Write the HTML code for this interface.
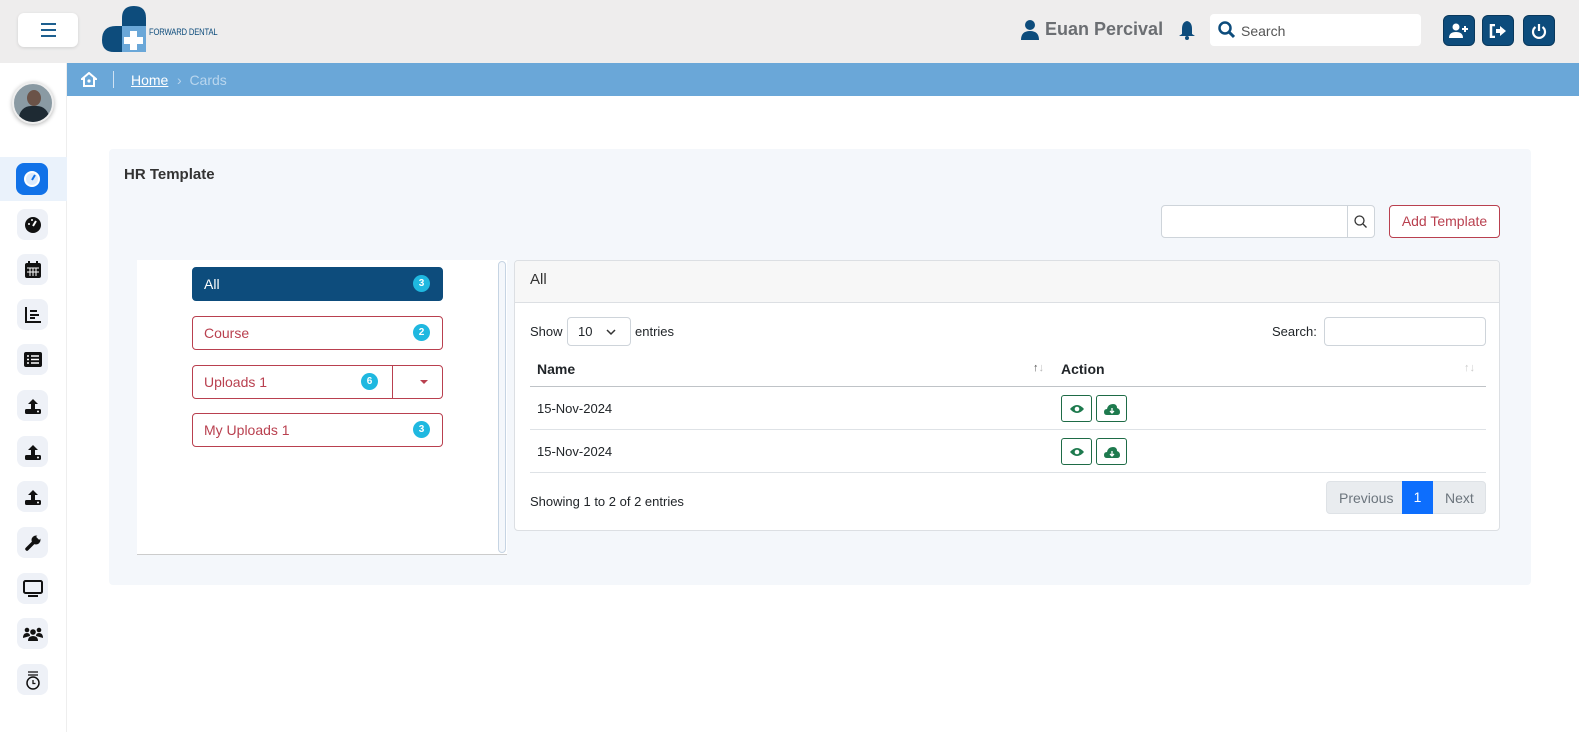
<!DOCTYPE html>
<html><head><meta charset="utf-8"><style>
*{box-sizing:border-box;margin:0;padding:0}
body{width:1579px;height:732px;overflow:hidden;background:#fff;font-family:"Liberation Sans",sans-serif;color:#212529;position:relative;font-size:14px}
.abs{position:absolute}
.top{left:0;top:0;width:1579px;height:63px;background:#eeeded}
.ham{left:18px;top:13px;width:60px;height:34px;background:#fff;border-radius:6px;box-shadow:0 1px 3px rgba(0,0,0,.12)}
.ham i{position:absolute;left:23px;width:15px;height:2px;background:#1d5f8f}
.crumb{left:67px;top:63px;width:1512px;height:33px;background:#6aa7d8}
.side{left:0;top:63px;width:67px;height:669px;background:#fff;border-right:1px solid #eee}
.ic{left:17px;width:31px;height:31px;border-radius:8px;background:#eef1f7;display:flex;align-items:center;justify-content:center}
.tbtn{top:15px;width:32px;height:31px;border-radius:6px;background:#0d4c7c;border:1px solid #09385c;display:flex;align-items:center;justify-content:center}
.card{left:109px;top:149px;width:1422px;height:436px;background:#f4f7fb;border-radius:4px}
.lb{left:192px;width:251px;height:34px;border:1px solid #b9404f;border-radius:4px;color:#b9404f;font-size:14px;padding:8px 11px;background:#fff}
.badge{position:absolute;width:17px;height:17px;border-radius:50%;background:#1fb8e0;color:#fff;font-size:10px;font-weight:bold;text-align:center;line-height:17px;top:7px;right:12px}
.gb{width:31px;height:27px;border:1px solid #1e6b46;border-radius:3px;display:flex;align-items:center;justify-content:center;background:#fff}
.line{left:530px;width:956px;height:1px;background:#dee2e6}
</style></head><body>
<div class="abs top"></div>
<div class="abs ham"><i style="top:10px"></i><i style="top:16px"></i><i style="top:22px"></i></div>
<svg class="abs" style="left:102px;top:6px" width="50" height="46" viewBox="0 0 50 46">
<path d="M20 12 Q20 0 32 0 Q44 0 44 12 V46 H20Z" fill="#0d4c7c"/>
<path d="M0 34 Q0 20 14 20 H20 V46 H12 Q0 46 0 34Z" fill="#0d4c7c"/>
<rect x="20" y="20" width="24" height="26" fill="#6aa7d8"/>
<path d="M28 25h7v6h6v7h-6v6h-7v-6h-6v-7h6z" fill="#fff"/></svg>
<div class="abs" style="left:149px;top:27px;font-size:9px;color:#0d4c7c;letter-spacing:-.2px;transform:scaleX(.85);transform-origin:left">FORWARD DENTAL</div>
<svg class="abs" style="left:1021px;top:20px" width="18" height="20" viewBox="0 0 18 20"><circle cx="9" cy="5" r="5" fill="#0d4c7c"/><path d="M0 20 Q0 11 9 11 Q18 11 18 20Z" fill="#0d4c7c"/></svg>
<div class="abs" style="left:1045px;top:19px;font-size:18px;font-weight:bold;color:#6b6e72">Euan Percival</div>
<svg class="abs" style="left:1179px;top:20px" width="16" height="20" viewBox="0 0 16 20"><path d="M8 1 Q13 2 13 9 V14 L16 16 H0 L3 14 V9 Q3 2 8 1Z" fill="#0d4c7c"/><circle cx="8" cy="18" r="2" fill="#0d4c7c"/></svg>
<div class="abs" style="left:1210px;top:14px;width:211px;height:32px;background:#fff;border-radius:4px"></div>
<svg class="abs" style="left:1218px;top:21px" width="17" height="18" viewBox="0 0 17 18"><circle cx="7" cy="7" r="5.5" stroke="#0d4c7c" stroke-width="2.5" fill="none"/><path d="M11 11l5 5" stroke="#0d4c7c" stroke-width="3"/></svg>
<div class="abs" style="left:1241px;top:23px;font-size:14px;color:#555">Search</div>
<div class="abs tbtn" style="left:1443px"><svg width="20" height="16" viewBox="0 0 20 16"><circle cx="7" cy="4" r="3.5" fill="#fff"/><path d="M0 15 Q0 9 7 9 Q14 9 14 15Z" fill="#fff"/><path d="M16 3v6M13 6h6" stroke="#fff" stroke-width="2"/></svg></div>
<div class="abs tbtn" style="left:1482px"><svg width="18" height="14" viewBox="0 0 18 14"><path d="M6 1H2v12h4" stroke="#fff" stroke-width="2.5" fill="none"/><path d="M7 5h4V2l6 5-6 5V9H7z" fill="#fff"/></svg></div>
<div class="abs tbtn" style="left:1523px"><svg width="16" height="16" viewBox="0 0 16 16"><path d="M4.5 4a6 6 0 1 0 7 0" stroke="#fff" stroke-width="2.2" fill="none"/><path d="M8 1v7" stroke="#fff" stroke-width="2.2"/></svg></div>
<div class="abs crumb"></div>
<svg class="abs" style="left:81px;top:72px" width="16" height="15" viewBox="0 0 16 15"><path d="M8 1L1 7h2v7h10V7h2z" stroke="#fff" stroke-width="2" fill="none"/><circle cx="8" cy="9" r="1.6" fill="#fff"/></svg>
<div class="abs" style="left:113px;top:71px;width:1px;height:17px;background:#cfe2f3"></div>
<div class="abs" style="left:131px;top:72px;color:#fff;text-decoration:underline;font-size:14px">Home</div>
<div class="abs" style="left:177px;top:72px;color:#b9d6ee;font-size:14px">›&nbsp; Cards</div>
<div class="abs side"></div>
<div class="abs" style="left:12px;top:82px;width:42px;height:42px;border-radius:50%;background:#8a9aa3;box-shadow:0 1px 4px rgba(0,0,0,.3);border:2px solid #eee;overflow:hidden"><div style="position:absolute;left:13px;top:6px;width:14px;height:16px;border-radius:50%;background:#6b5348"></div><div style="position:absolute;left:5px;top:22px;width:30px;height:20px;border-radius:12px 12px 0 0;background:#1e2a33"></div></div>
<div class="abs" style="left:0;top:157px;width:67px;height:44px;background:#eaf2fb"></div>
<div class="abs ic" style="top:163px;left:16px;width:32px;height:32px;background:#1172e8"><svg width="18" height="18" viewBox="0 0 18 18"><circle cx="9" cy="9" r="8" fill="#fff"/><circle cx="9" cy="9" r="6" fill="#1172e8" opacity=".15"/><path d="M9 10L12 5" stroke="#1172e8" stroke-width="2"/></svg></div>
<div class="abs ic" style="top:209px"><svg width="18" height="18" viewBox="0 0 18 18"><circle cx="9" cy="9" r="8" fill="#111"/><path d="M9 10L12 5" stroke="#fff" stroke-width="2"/><circle cx="5" cy="8" r="1" fill="#fff"/><circle cx="8" cy="4" r="1" fill="#fff"/></svg></div>
<div class="abs ic" style="top:254px"><svg width="16" height="17" viewBox="0 0 16 17"><rect x="0" y="2" width="16" height="15" rx="2" fill="#111"/><path d="M4 0v4M12 0v4" stroke="#111" stroke-width="2"/><path d="M2 7h12M2 11h12M5 7v8M8 7v8M11 7v8" stroke="#fff" stroke-width="1"/></svg></div>
<div class="abs ic" style="top:299px"><svg width="16" height="16" viewBox="0 0 16 16"><path d="M1 0v15h15" stroke="#111" stroke-width="2" fill="none"/><path d="M5 4h7M5 8h9M5 11h5" stroke="#111" stroke-width="2"/></svg></div>
<div class="abs ic" style="top:344px"><svg width="18" height="15" viewBox="0 0 18 15"><rect width="18" height="15" rx="2" fill="#111"/><path d="M3 4h2M7 4h8M3 7.5h2M7 7.5h8M3 11h2M7 11h8" stroke="#fff" stroke-width="1.5"/></svg></div>
<div class="abs ic" style="top:390px"><svg width="16" height="16" viewBox="0 0 16 16"><path d="M8 1L3 6h3v5h4V6h3z" fill="#111"/><rect x="0" y="11" width="16" height="5" rx="1.5" fill="#111"/><circle cx="13" cy="13.5" r="1" fill="#fff"/></svg></div>
<div class="abs ic" style="top:436px"><svg width="16" height="16" viewBox="0 0 16 16"><path d="M8 1L3 6h3v5h4V6h3z" fill="#111"/><rect x="0" y="11" width="16" height="5" rx="1.5" fill="#111"/><circle cx="13" cy="13.5" r="1" fill="#fff"/></svg></div>
<div class="abs ic" style="top:481px"><svg width="16" height="16" viewBox="0 0 16 16"><path d="M8 1L3 6h3v5h4V6h3z" fill="#111"/><rect x="0" y="11" width="16" height="5" rx="1.5" fill="#111"/><circle cx="13" cy="13.5" r="1" fill="#fff"/></svg></div>
<div class="abs ic" style="top:527px"><svg width="16" height="16" viewBox="0 0 16 16"><path d="M2 14L9 7" stroke="#111" stroke-width="3.5" stroke-linecap="round"/><circle cx="11" cy="5" r="4.5" fill="#111"/><path d="M12 1l3 3" stroke="#eef1f7" stroke-width="2.5"/></svg></div>
<div class="abs ic" style="top:573px"><svg width="20" height="17" viewBox="0 0 20 17"><rect x="1" y="1" width="18" height="12" rx="1.5" stroke="#111" stroke-width="2" fill="none"/><path d="M5 16h10" stroke="#111" stroke-width="2"/></svg></div>
<div class="abs ic" style="top:618px"><svg width="20" height="14" viewBox="0 0 20 14"><circle cx="4" cy="3" r="2.3" fill="#111"/><circle cx="16" cy="3" r="2.3" fill="#111"/><circle cx="10" cy="5" r="2.8" fill="#111"/><path d="M0 11Q0 6 4 6Q7 6 7 9ZM20 11Q20 6 16 6Q13 6 13 9ZM5 14Q5 9 10 9Q15 9 15 14Z" fill="#111"/></svg></div>
<div class="abs ic" style="top:664px"><svg width="16" height="20" viewBox="0 0 16 20"><path d="M3 2h10M3 5h10" stroke="#111" stroke-width="1.2"/><circle cx="8" cy="13" r="6" stroke="#111" stroke-width="1.5" fill="none"/><path d="M8 10v3.5h2.5" stroke="#111" stroke-width="1.3" fill="none"/></svg></div>

<div class="abs card"></div>
<div class="abs" style="left:124px;top:166px;font-size:15px;font-weight:bold;color:#333">HR Template</div>
<div class="abs" style="left:1161px;top:205px;width:214px;height:33px;background:#fff;border:1px solid #ced4da;border-radius:4px"><div style="position:absolute;left:185px;top:0;width:1px;height:31px;background:#ced4da"></div><svg style="position:absolute;left:192px;top:9px" width="13" height="13" viewBox="0 0 13 13"><circle cx="5.5" cy="5.5" r="4.5" stroke="#333" stroke-width="1.3" fill="none"/><path d="M9 9l3.5 3.5" stroke="#333" stroke-width="1.3"/></svg></div>
<div class="abs" style="left:1389px;top:205px;width:111px;height:33px;border:1px solid #b9404f;border-radius:4px;color:#b9404f;font-size:14px;text-align:center;line-height:31px;background:#fff">Add Template</div>

<div class="abs" style="left:137px;top:260px;width:370px;height:295px;background:#fff;border-bottom:1px solid #ccc"></div>
<div class="abs" style="left:498px;top:261px;width:8px;height:292px;border:1px solid #c6d4e3;border-radius:4px;background:#f4f7fb"></div>
<div class="abs lb" style="top:267px;background:#0d4c7c;border-color:#0d4c7c;color:#fff">All<span class="badge">3</span></div>
<div class="abs lb" style="top:316px">Course<span class="badge">2</span></div>
<div class="abs lb" style="top:365px">Uploads 1<span class="badge" style="right:64px">6</span><div style="position:absolute;left:199px;top:0;width:1px;height:32px;background:#b9404f"></div><div style="position:absolute;right:14px;top:14px;border:4px solid transparent;border-top:4px solid #b9404f;border-bottom:0"></div></div>
<div class="abs lb" style="top:413px">My Uploads 1<span class="badge">3</span></div>

<div class="abs" style="left:514px;top:260px;width:986px;height:271px;background:#fff;border:1px solid #dcdfe3;border-radius:4px;overflow:hidden"><div style="height:42px;background:#f7f7f7;border-bottom:1px solid #dcdfe3;padding:10px 15px;font-size:15px;color:#333">All</div></div>
<div class="abs" style="left:530px;top:324px;font-size:13px">Show</div>
<div class="abs" style="left:567px;top:317px;width:64px;height:29px;border:1px solid #ced4da;border-radius:4px;font-size:13px;padding:6px 10px">10<svg style="position:absolute;right:14px;top:11px" width="10" height="7" viewBox="0 0 10 7"><path d="M1 1l4 4 4-4" stroke="#333" stroke-width="1.5" fill="none"/></svg></div>
<div class="abs" style="left:635px;top:324px;font-size:13px">entries</div>
<div class="abs" style="left:1272px;top:324px;font-size:13px">Search:</div>
<div class="abs" style="left:1324px;top:317px;width:162px;height:29px;border:1px solid #ced4da;border-radius:4px"></div>
<div class="abs" style="left:537px;top:361px;font-size:14px;font-weight:bold">Name</div>
<div class="abs" style="left:1033px;top:362px;font-size:11px;color:#555">↑<span style="color:#bbb">↓</span></div>
<div class="abs" style="left:1061px;top:361px;font-size:14px;font-weight:bold">Action</div>
<div class="abs" style="left:1464px;top:362px;font-size:11px;color:#ccc">↑↓</div>
<div class="abs line" style="top:386px;background:#bfc3c7"></div>
<div class="abs" style="left:537px;top:401px;font-size:13px">15-Nov-2024</div>
<div class="abs line" style="top:429px"></div>
<div class="abs" style="left:537px;top:444px;font-size:13px">15-Nov-2024</div>
<div class="abs line" style="top:472px"></div>
<div class="abs" style="left:1061px;top:395px;display:flex;gap:4px"><div class="gb"><svg width="14" height="10" viewBox="0 0 14 10"><path d="M0 5Q7 -3 14 5Q7 13 0 5Z" fill="#1e7a4e"/><circle cx="7" cy="5" r="2.3" fill="#fff"/></svg></div><div class="gb"><svg width="16" height="12" viewBox="0 0 16 12"><path d="M3 12Q0 12 0 9Q0 6 3 6Q4 1 9 1Q13 1 13 5Q16 6 16 9Q16 12 13 12Z" fill="#1e7a4e"/><path d="M8 5v5M6 8l2 2 2-2" stroke="#fff" stroke-width="1.3" fill="none"/></svg></div></div>
<div class="abs" style="left:1061px;top:438px;display:flex;gap:4px"><div class="gb"><svg width="14" height="10" viewBox="0 0 14 10"><path d="M0 5Q7 -3 14 5Q7 13 0 5Z" fill="#1e7a4e"/><circle cx="7" cy="5" r="2.3" fill="#fff"/></svg></div><div class="gb"><svg width="16" height="12" viewBox="0 0 16 12"><path d="M3 12Q0 12 0 9Q0 6 3 6Q4 1 9 1Q13 1 13 5Q16 6 16 9Q16 12 13 12Z" fill="#1e7a4e"/><path d="M8 5v5M6 8l2 2 2-2" stroke="#fff" stroke-width="1.3" fill="none"/></svg></div></div>
<div class="abs" style="left:530px;top:494px;font-size:13px">Showing 1 to 2 of 2 entries</div>
<div class="abs" style="left:1326px;top:481px;width:160px;height:33px;background:#e9ecef;border:1px solid #dee2e6;border-radius:4px;font-size:14px;color:#6c757d">
<span style="position:absolute;left:12px;top:8px">Previous</span>
<span style="position:absolute;left:75px;top:-1px;width:31px;height:33px;background:#0d6efd;color:#fff;text-align:center;line-height:33px">1</span>
<span style="position:absolute;left:118px;top:8px">Next</span></div>
</body></html>
